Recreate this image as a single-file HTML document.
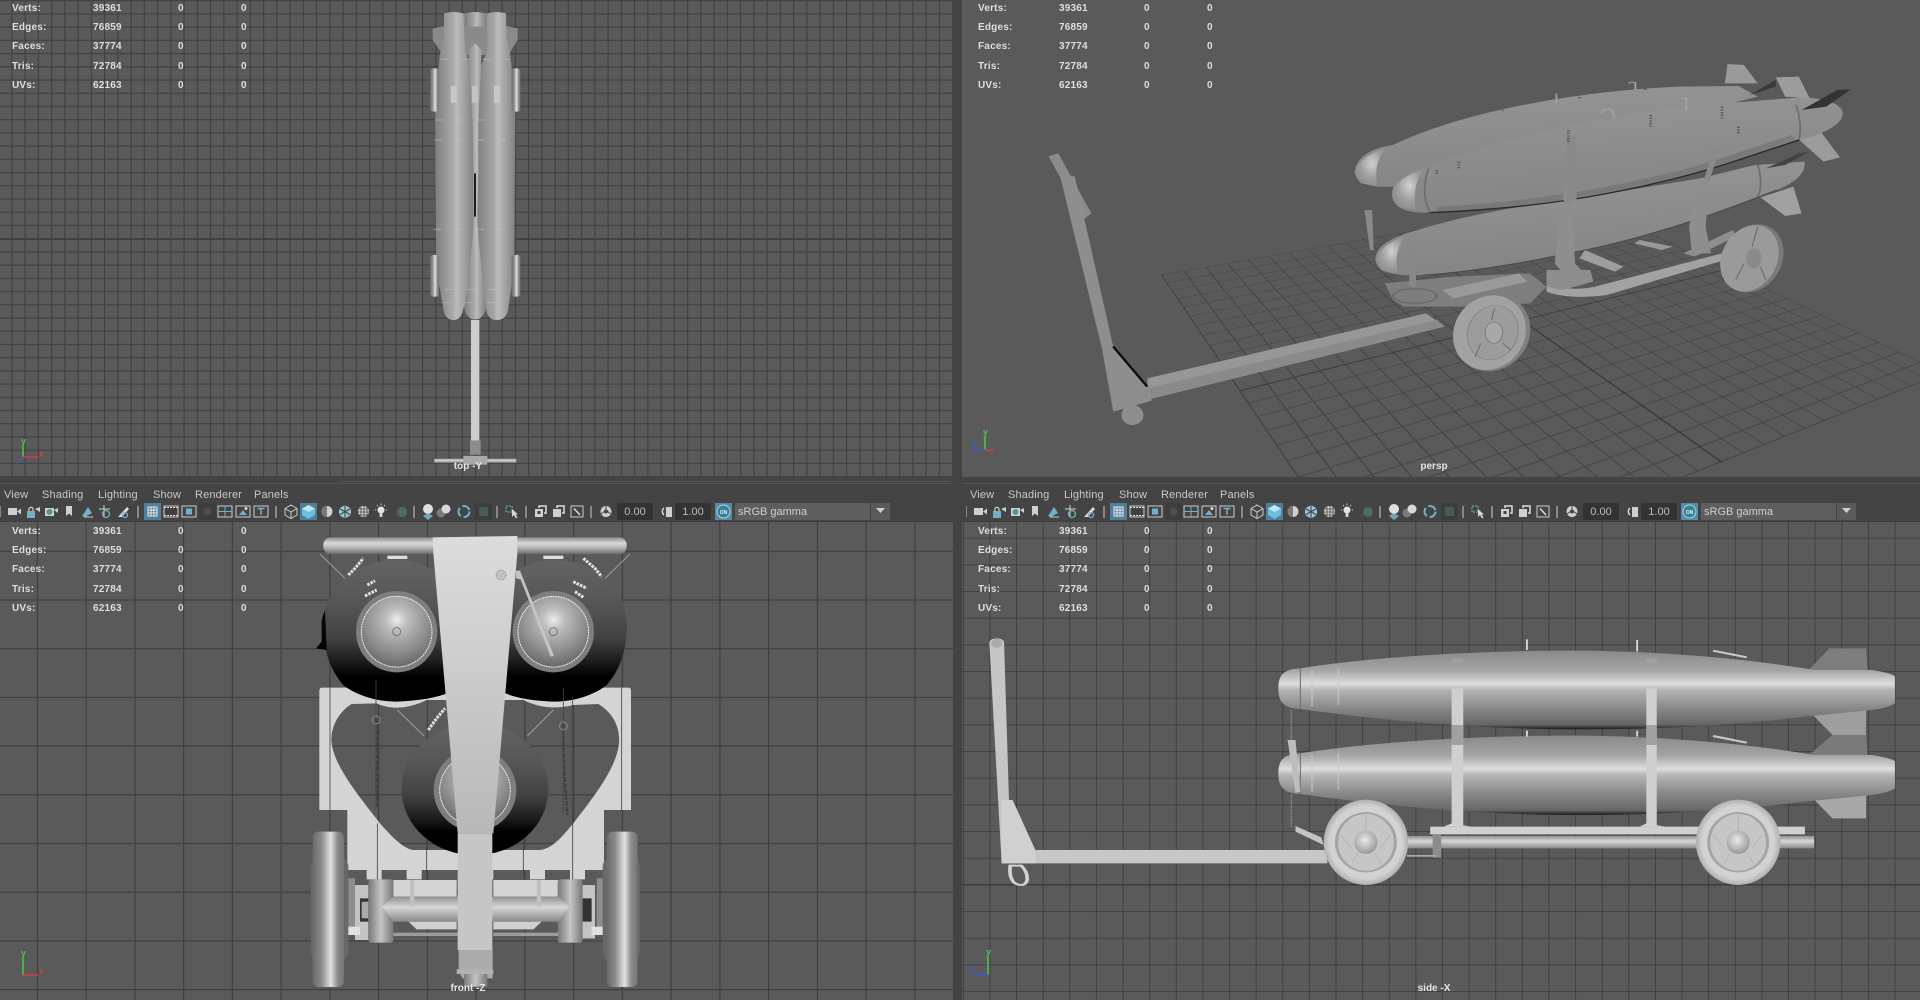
<!DOCTYPE html>
<html lang="en">
<head>
<meta charset="utf-8">
<title>Maya Viewports</title>
<style>
html,body{margin:0;padding:0;width:1920px;height:1000px;overflow:hidden;background:#444;font-family:"Liberation Sans",sans-serif}
svg{position:absolute;left:0;top:0;display:block}
.hud{position:absolute;width:260px;color:#dedede;font:bold 10px/19.2px "Liberation Sans",sans-serif;letter-spacing:.2px}
.hud div{position:relative;height:19.2px}
.hud span{position:absolute;top:0}
.hud span:nth-child(2){left:81px}
.hud span:nth-child(3){left:166px}
.hud span:nth-child(4){left:229px}
.lab{position:absolute;color:#e4e4e4;font:bold 10px/12px "Liberation Sans",sans-serif;white-space:nowrap;transform:translateX(-50%)}
.m{position:absolute;top:489px;color:#c9c9c9;font:11px/13px "Liberation Sans",sans-serif;letter-spacing:.15px;white-space:nowrap}
.fld{position:absolute;top:503px;height:17px;background:#333;color:#bcbcbc;font:11px/18px "Liberation Sans",sans-serif;text-align:center;border-radius:2px}
.cmb{position:absolute;top:503px;height:17px;background:#5e5e5e;color:#cfcfcf;font:11px/19px "Liberation Sans",sans-serif;padding-left:3px;box-sizing:border-box;white-space:nowrap}
</style>
</head>
<body>
<svg width="1920" height="1000" viewBox="0 0 1920 1000">
<defs>
<pattern id="gTL" patternUnits="userSpaceOnUse" x="11.25" y=".1" width="13.25" height="13.22"><rect width="13.25" height="13.22" fill="#5a5a5a"/><rect width="1.2" height="13.22" fill="#424242"/><rect width="13.25" height="1.2" fill="#424242"/></pattern>
<pattern id="gBL" patternUnits="userSpaceOnUse" x="36.8" y="15" width="48.75" height="48.7"><rect width="48.75" height="48.7" fill="#5a5a5a"/><rect width="1.2" height="48.7" fill="#3f3f3f"/><rect width="48.75" height="1.2" fill="#3f3f3f"/></pattern>
<pattern id="gBR" patternUnits="userSpaceOnUse" x="4.5" y="4.3" width="26.62" height="26.67"><rect width="26.62" height="26.67" fill="#5a5a5a"/><rect width="1" height="26.67" fill="#414141"/><rect width="26.62" height="1" fill="#414141"/></pattern>
</defs>
<rect x="0" y="0" width="953" height="477" fill="url(#gTL)"/>
<rect x="0" y="238.5" width="953" height="1.4" fill="#3e3e3e"/>
<rect x="962" y="0" width="958" height="477" fill="#5a5a5a"/>
<rect x="0" y="522" width="953" height="478" fill="url(#gBL)"/>
<rect x="962" y="522" width="958" height="478" fill="url(#gBR)"/>
<rect x="962" y="884" width="958" height="1.3" fill="#3c3c3c"/>
</svg>

<div style="position:absolute;left:962px;top:0;width:958px;height:477px;overflow:hidden">
<div style="position:absolute;left:-962px;top:0;width:1002px;height:1002px;transform-origin:0 0;transform:matrix3d(.89304,-.01403,0,.00029838,-.39292,.05807,0,-.00044302,0,0,1,0,1161,275,0,1);background-image:linear-gradient(90deg,transparent 500px,#3a3a3a 500px,#3a3a3a 503px,transparent 503px),linear-gradient(transparent 500px,#3a3a3a 500px,#3a3a3a 503px,transparent 503px),linear-gradient(#434343 2px,transparent 2px),linear-gradient(90deg,#434343 2px,transparent 2px);background-size:1002px 1002px,1002px 1002px,41.667px 41.667px,41.667px 41.667px"></div>
</div>

<svg width="1920" height="1000" viewBox="0 0 1920 1000">
<defs>
<linearGradient id="bombTop" x1="0" y1="0" x2="0" y2="1"><stop offset="0" stop-color="#646464"/><stop offset=".3" stop-color="#565656"/><stop offset=".55" stop-color="#424242"/><stop offset=".72" stop-color="#1c1c1c"/><stop offset=".82" stop-color="#000"/><stop offset="1" stop-color="#000"/></linearGradient>
<radialGradient id="dome" cx=".5" cy=".33" r=".72"><stop offset="0" stop-color="#ececec"/><stop offset=".22" stop-color="#bcbcbc"/><stop offset=".7" stop-color="#858585"/><stop offset="1" stop-color="#606060"/></radialGradient>
<linearGradient id="bar" x1="0" y1="0" x2="0" y2="1"><stop offset="0" stop-color="#8a8a8a"/><stop offset=".35" stop-color="#d8d8d8"/><stop offset=".55" stop-color="#c0c0c0"/><stop offset="1" stop-color="#6d6d6d"/></linearGradient>
<linearGradient id="pan" x1="0" y1="0" x2="0" y2="1"><stop offset="0" stop-color="#dcdcdc"/><stop offset="1" stop-color="#b8b8b8"/></linearGradient>
<linearGradient id="wheelH" x1="0" y1="0" x2="1" y2="0"><stop offset="0" stop-color="#6a6a6a"/><stop offset=".28" stop-color="#8c8c8c"/><stop offset=".58" stop-color="#e2e2e2"/><stop offset=".8" stop-color="#8a8a8a"/><stop offset="1" stop-color="#747474"/></linearGradient>
<linearGradient id="cyl" x1="0" y1="0" x2="1" y2="0"><stop offset="0" stop-color="#787878"/><stop offset=".5" stop-color="#c4c4c4"/><stop offset="1" stop-color="#787878"/></linearGradient>
<linearGradient id="tube" x1="0" y1="0" x2="0" y2="1"><stop offset="0" stop-color="#909090"/><stop offset=".42" stop-color="#d6d6d6"/><stop offset="1" stop-color="#8a8a8a"/></linearGradient>
<linearGradient id="sideBomb" x1="0" y1="0" x2="0" y2="1"><stop offset="0" stop-color="#8a8a8a"/><stop offset=".25" stop-color="#a4a4a4"/><stop offset=".42" stop-color="#dedede"/><stop offset=".5" stop-color="#b4b4b4"/><stop offset=".72" stop-color="#8a8a8a"/><stop offset=".94" stop-color="#666"/><stop offset="1" stop-color="#1a1a1a"/></linearGradient>
<linearGradient id="perspB" x1="0" y1="0" x2=".25" y2="1"><stop offset="0" stop-color="#969696"/><stop offset="1" stop-color="#858585"/></linearGradient>
<linearGradient id="topT" x1="0" y1="0" x2="1" y2="0"><stop offset="0" stop-color="#7e7e7e"/><stop offset=".45" stop-color="#a8a8a8"/><stop offset=".55" stop-color="#bcbcbc"/><stop offset="1" stop-color="#808080"/></linearGradient>
<radialGradient id="wheelS" cx=".5" cy=".5" r=".5"><stop offset="0" stop-color="#d4d4d4"/><stop offset=".85" stop-color="#d2d2d2"/><stop offset="1" stop-color="#b0b0b0"/></radialGradient>
<radialGradient id="hub" cx=".45" cy=".4" r=".6"><stop offset="0" stop-color="#e8e8e8"/><stop offset="1" stop-color="#999"/></radialGradient>
<radialGradient id="nose" cx=".55" cy=".4" r=".6"><stop offset="0" stop-color="#d0d0d0"/><stop offset=".6" stop-color="#a0a0a0"/><stop offset="1" stop-color="#8e8e8e"/></radialGradient>
</defs>

<!-- TOP VIEW -->
<g transform="translate(400 0) scale(.33333)">
<path d="M98 85 L135 78 L135 40 L318 40 L318 78 L353 85 L353 120 L325 165 L130 165 L98 120Z" fill="#8a8a8a"/>
<path d="M132 40 Q160 32 190 40 L195 150 L222 230 L222 880 L190 925 Q185 960 160 960 Q135 960 130 925 L108 800 L105 300 L120 160 L132 120Z" fill="url(#topT)"/>
<path d="M262 40 Q290 32 318 40 L320 120 L330 160 L346 300 L343 800 L325 925 Q320 960 290 960 Q262 960 258 925 L230 880 L230 230 L262 150Z" fill="url(#topT)"/>
<path d="M195 40 Q225 32 255 40 L258 80 L195 80Z" fill="url(#topT)"/>
<path d="M205 150 L225 130 L245 150 L235 370 L235 520 L232 660 L235 710 L250 860 L258 925 Q250 958 225 958 Q200 958 193 925 L205 840 L218 710 L220 660 L220 520 L218 370Z" fill="url(#topT)"/>
<rect x="90" y="205" width="27" height="130" rx="8" fill="url(#wheelH)"/><rect x="335" y="205" width="26" height="130" rx="8" fill="url(#wheelH)"/>
<rect x="90" y="765" width="27" height="125" rx="8" fill="url(#wheelH)"/><rect x="335" y="765" width="26" height="125" rx="8" fill="url(#wheelH)"/>
<rect x="222" y="520" width="6" height="130" fill="#1e1e1e"/>
<rect x="213" y="960" width="25" height="362" fill="#cecece"/>
<rect x="210" y="1322" width="32" height="42" fill="#8c8c8c"/>
<rect x="103" y="1376" width="246" height="13" rx="3" fill="url(#bar)"/>
<rect x="190" y="1368" width="72" height="26" fill="#a8a8a8"/>
<rect x="152" y="258" width="18" height="50" fill="#c8c8c8"/><rect x="216" y="258" width="18" height="50" fill="#c4c4c4"/><rect x="282" y="258" width="18" height="50" fill="#c8c8c8"/>
<path d="M120 178H330M105 360H345M102 420H345M100 688H350M135 868H315M132 908H320" stroke="#c0c0c0" stroke-width="3" stroke-dasharray="24 40" fill="none" opacity=".6"/>
</g>

<!-- PERSPECTIVE -->
<g transform="translate(1020 50) scale(.54847 .33333)">
<path d="M1285 100L1290 42L1320 45L1345 100Z" fill="#9a9a9a"/>
<path d="M1378 82L1420 80L1440 145L1395 140Z" fill="#9c9c9c"/>
<path d="M1420 268L1460 245L1495 322L1465 335Z" fill="#9c9c9c"/>
<path d="M1350 442L1410 410L1425 490L1395 498Z" fill="#a0a0a0"/>
<path d="M665 700L790 680L930 670L960 710L930 760L800 770L700 770L680 750Z" fill="#7e7e7e"/>
<path d="M770 720L910 670L925 695L790 745Z" fill="#9a9a9a"/>
<path d="M1030 600L1100 650L1085 665L1020 625Z" fill="#9e9e9e"/>
<path d="M1130 570L1190 590L1170 600L1120 580Z" fill="#9a9a9a"/>
<path d="M960 700Q1010 730 1060 705L1280 610L1285 630L1070 735Q1000 750 960 725Z" fill="#a2a2a2"/>
<path d="M1210 610L1300 540L1305 560L1230 620Z" fill="#8e8e8e"/>
<path d="M960 660L1040 660L1045 695L990 720L960 710Z" fill="#8e8e8e"/>
<path d="M648 625C650 585 680 565 705 550C800 500 900 470 1000 450L1240 385L1340 345L1430 335C1435 370 1410 400 1380 420L1300 470C1200 530 1100 580 1000 610C900 645 800 670 735 675C680 680 648 665 648 625Z" fill="url(#perspB)"/>
<path d="M735 675C800 670 900 645 1000 610C1100 580 1200 530 1300 470L1380 420" fill="none" stroke="#4a4a4a" stroke-width="3"/>
<path d="M610 370C612 320 640 295 680 285C800 190 1000 125 1200 110L1310 108L1345 140L1200 200L800 350L680 410Q620 415 610 370Z" fill="url(#perspB)"/>
<path d="M678 430C680 385 710 365 745 350C900 250 1150 170 1300 158L1400 145C1460 135 1500 160 1500 190C1500 230 1450 260 1420 270L1300 335C1200 390 1080 430 1000 450C900 475 800 485 745 488C700 490 678 470 678 430Z" fill="url(#perspB)"/>
<path d="M760 478C820 475 905 462 1000 438C1080 418 1200 378 1295 325L1410 262" fill="none" stroke="#6e6e6e" stroke-width="16" opacity=".55"/>
<path d="M745 488C800 485 900 475 1000 450C1080 430 1200 390 1300 335L1420 270" fill="none" stroke="#2a2a2a" stroke-width="4"/>
<path d="M690 470C660 420 700 375 735 358C722 390 716 430 722 480Z" fill="url(#nose)"/>
<path d="M622 400C592 350 636 310 666 295C650 330 646 370 652 410Z" fill="url(#nose)"/>
<path d="M660 662C632 615 670 580 700 560C688 600 682 630 690 672Z" fill="url(#nose)"/>
<path d="M745 355C735 400 735 450 748 488M1415 165C1422 200 1425 240 1420 270M1345 345C1352 380 1352 420 1345 440" fill="none" stroke="#6c6c6c" stroke-width="3"/>
<path d="M1330 135L1378 90L1378 110L1340 130Z" fill="#3a3a3a"/>
<path d="M1425 180L1490 120L1515 118L1470 170Z" fill="#333"/>
<path d="M1360 355L1420 310L1440 305L1395 345Z" fill="#444"/>
<path d="M995 260L1012 260L1015 450L1002 465L990 450Z" fill="#8a8a8a"/>
<path d="M985 470L1005 465L1012 640L1040 690L1000 690L975 640Z" fill="#8e8e8e"/>
<path d="M1265 290L1278 290L1258 385L1245 400Z" fill="#8a8a8a"/>
<path d="M1235 400L1258 385L1250 530L1260 610L1225 610L1220 530Z" fill="#8e8e8e"/>
<path d="M628 480L642 480L645 600L638 600Z" fill="#888"/>
<rect x="710" y="590" width="12" height="120" fill="#888"/>
<ellipse cx="720" cy="738" rx="40" ry="22" fill="none" stroke="#6a6a6a" stroke-width="4"/>
<path d="M232 985L740 790L775 830L235 1048Z" fill="#979797"/><path d="M232 1015L760 810L775 830L235 1048Z" fill="#8a8a8a"/>
<path d="M52 318L70 310L130 490L115 510Z" fill="#8c8c8c"/>
<path d="M72 370L100 380L170 890L235 1010L240 1052L170 1085L150 900Z" fill="#8e8e8e"/>
<path d="M170 890L232 1010" stroke="#0c0c0c" stroke-width="5"/>
<ellipse cx="205" cy="1095" rx="20" ry="30" fill="#8e8e8e"/>
<ellipse cx="1335" cy="625" rx="56" ry="103" fill="#7a7a7a" transform="rotate(8 1335 625)"/>
<ellipse cx="1330" cy="625" rx="52" ry="100" fill="#9a9a9a" transform="rotate(8 1330 625)"/>
<ellipse cx="1338" cy="625" rx="14" ry="30" fill="#8a8a8a"/>
<path d="M1335 590L1345 530M1320 640L1305 690M1350 650L1360 690" stroke="#6a6a6a" stroke-width="2"/>
<ellipse cx="860" cy="848" rx="70" ry="116" fill="#808080" transform="rotate(5 860 848)"/>
<ellipse cx="856" cy="848" rx="66" ry="112" fill="#a2a2a2" transform="rotate(5 856 848)"/>
<ellipse cx="862" cy="848" rx="46" ry="82" fill="#9c9c9c" stroke="#858585" stroke-width="2" transform="rotate(5 862 848)"/>
<ellipse cx="864" cy="848" rx="16" ry="32" fill="#a8a8a8" stroke="#7b7b7b" stroke-width="2"/>
<path d="M860 810L865 775M840 880L830 920M880 880L895 900" stroke="#6a6a6a" stroke-width="2"/>
<path d="M1060 190Q1062 175 1078 178L1085 205M1205 145L1215 145L1215 180M978 130V160M1110 100Q1112 95 1122 98V120" stroke="#a6a6a6" stroke-width="3" fill="none"/>
<path d="M760 360v15M800 335v20M1000 240v40M1150 195v35M1280 170v35M1310 230v20M880 165v18M1020 125v20M1140 100v20M700 245v20M660 265v20" stroke="#5a5a5a" stroke-width="5" stroke-dasharray="4 4" fill="none"/>
</g>

<!-- FRONT -->
<g transform="translate(280 510) scale(.33333)">
<path fill-rule="evenodd" fill="#d4d4d4" d="M118 542Q118 533 127 533H1045Q1053 533 1053 542V900H972V1080H915V1108H870V1080H795V1108H750V1080H640V1108H535V1080H425V1108H380V1080H305V1108H260V1080H202V900H118ZM215 582C170 610 150 660 155 700C165 770 230 850 300 940C340 985 370 1015 400 1020H780C820 1015 850 975 880 940C950 850 1010 770 1017 700C1020 650 1000 610 955 582L880 585C820 600 770 590 730 570L440 570C400 590 340 605 290 580Z"/>
<path d="M340 1110H530V1160H340ZM640 1110H835V1160H640Z" fill="#d4d4d4"/>
<path d="M385 1235H530V1258H410ZM640 1235H785L760 1258H640Z" fill="#d0d0d0"/>
<ellipse cx="585" cy="838" rx="220" ry="198" fill="url(#bombTop)"/>
<path d="M130 350C130 230 230 150 350 150C450 150 530 220 560 300L560 520C500 560 440 570 350 575C280 575 220 550 190 525C150 480 130 420 130 350Z" fill="url(#bombTop)"/>
<path d="M1040 350C1040 230 940 150 820 150C720 150 650 220 620 300L620 520C680 560 730 570 820 575C890 575 950 550 980 525C1020 480 1040 420 1040 350Z" fill="url(#bombTop)"/>
<path d="M108 415L125 395L125 330L135 300L140 420Z" fill="#050505"/>
<path d="M120 132L195 205M1050 132L975 205M352 600L432 678M820 600L742 678" stroke="#9c9c9c" stroke-width="3" fill="none"/>
<rect x="322" y="137" width="60" height="10" fill="#dcdcdc"/><rect x="790" y="137" width="60" height="10" fill="#dcdcdc"/>
<g fill="none" stroke="#e2e2e2" stroke-width="9" stroke-dasharray="8 3">
<path d="M205 195L225 175L250 145"/><path d="M262 225L285 212M255 258L290 240"/><path d="M910 145L945 175L965 200"/><path d="M880 215L920 235M885 245L910 262"/><path d="M445 660L470 625L495 595"/>
</g>
<circle cx="350" cy="365" r="122" fill="#7e7e7e"/><circle cx="350" cy="365" r="106" fill="url(#dome)" stroke="#ededed" stroke-width="3" stroke-dasharray="6 2"/><circle cx="350" cy="365" r="12" fill="none" stroke="#777" stroke-width="3"/>
<circle cx="820" cy="365" r="122" fill="#7e7e7e"/><circle cx="820" cy="365" r="106" fill="url(#dome)" stroke="#ededed" stroke-width="3" stroke-dasharray="6 2"/><circle cx="820" cy="365" r="12" fill="none" stroke="#777" stroke-width="3"/>
<circle cx="585" cy="840" r="124" fill="#7e7e7e"/><circle cx="585" cy="840" r="106" fill="url(#dome)" stroke="#ededed" stroke-width="3" stroke-dasharray="6 2"/>
<path d="M708 182L720 182L822 438L812 440L722 208L708 205Z" fill="#c4c4c4"/>
<path d="M288 510V900M850 533V910M292 940V1108M878 560V1108M440 985V1100M730 985V1100M150 533V900M1025 533V900" stroke="#444" stroke-width="2.500" fill="none"/>
<path d="M288 625C300 680 285 760 292 890M850 640C848 720 855 820 862 915" stroke="#424242" stroke-width="7" stroke-dasharray="14 4" fill="none"/>
<circle cx="288" cy="630" r="12" fill="none" stroke="#888" stroke-width="3"/><circle cx="850" cy="648" r="12" fill="none" stroke="#888" stroke-width="3"/>
<rect x="130" y="82" width="910" height="50" rx="22" fill="url(#bar)"/>
<rect x="92" y="1040" width="113" height="315" rx="30" fill="#686868"/><rect x="968" y="1040" width="112" height="315" rx="30" fill="#686868"/>
<rect x="98" y="965" width="94" height="466" rx="18" fill="url(#wheelH)"/><rect x="980" y="965" width="93" height="466" rx="18" fill="url(#wheelH)"/>
<path d="M205 1105H225V1270H205ZM950 1105H968V1270H950Z" fill="#8e8e8e"/>
<path d="M225 1125H265V1290H225ZM905 1125H945V1285H905Z" fill="#c4c4c4"/>
<path d="M240 1165H265V1235H240ZM905 1165H935V1235H905Z" fill="#333"/>
<path d="M245 1175H265V1225H245Z" fill="#aaa"/>
<rect x="265" y="1108" width="75" height="190" rx="8" fill="url(#cyl)"/><rect x="833" y="1108" width="75" height="190" rx="8" fill="url(#cyl)"/>
<path d="M305 1190L340 1160H835L868 1190L835 1235H340Z" fill="url(#tube)"/>
<rect x="340" y="1268" width="195" height="10" fill="#9c9c9c"/><rect x="640" y="1268" width="195" height="10" fill="#9c9c9c"/>
<path d="M205 1250H240V1275H205ZM935 1250H968V1275H935Z" fill="#e0e0e0"/>
<rect x="390" y="1110" width="13" height="80" fill="#c0c0c0"/><rect x="770" y="1110" width="13" height="80" fill="#c0c0c0"/>
<path d="M458 82L712 78L712 130L640 970H533L460 130Z" fill="url(#pan)"/>
<rect x="533" y="970" width="104" height="350" fill="#c6c6c6"/>
<path d="M536 1320H638V1405H548L536 1385Z" fill="#ababab"/>
<rect x="552" y="1378" width="70" height="52" fill="url(#cyl)"/>
<rect x="530" y="1378" width="110" height="14" fill="#b2b2b2"/>
<circle cx="663" cy="195" r="15" fill="#c2c2c2" stroke="#7b7b7b" stroke-width="2" stroke-dasharray="4 3"/>
</g>

<!-- SIDE -->
<g transform="translate(960 600) scale(.61224 .33333)">
<path d="M1385 212L1420 145L1480 145L1483 222Z" fill="#7e7e7e"/>
<path d="M1385 330L1480 320L1480 405L1425 405Z" fill="#9e9e9e"/>
<path d="M1385 468L1425 405L1480 405L1483 478Z" fill="#7a7a7a"/>
<path d="M1385 580L1480 575L1480 655L1425 655Z" fill="#a8a8a8"/>
<path d="M520 265C520 225 528 207 556 205C640 180 800 152 1000 152C1150 152 1300 180 1395 210L1490 210Q1527 222 1527 230V310Q1515 325 1480 332L1380 350C1250 380 1130 388 1000 388C850 388 680 360 556 327C528 325 520 305 520 265Z" fill="url(#sideBomb)"/>
<path d="M520 520C520 480 528 462 556 460C640 435 800 407 1000 407C1150 407 1300 435 1395 465L1490 465Q1527 477 1527 485V565Q1515 580 1480 587L1380 605C1250 635 1130 645 1000 645C850 645 680 615 556 582C528 580 520 560 520 520Z" fill="url(#sideBomb)"/>
<path d="M556 205V327M556 460V582" stroke="#777" stroke-width="2"/>
<path d="M575 210V320M618 205V315M575 465V575M618 460V570" stroke="#c8c8c8" stroke-width="4" opacity=".5"/>
<path d="M803 265H822V680H803ZM1121 265H1138V680H1121Z" fill="#cfcfcf"/>
<path d="M803 175H822V190H803ZM1121 175H1138V190H1121ZM803 375H822V435H803ZM1121 375H1138V435H1121Z" fill="#a0a0a0"/>
<path d="M803 670L835 680H790ZM1121 670L1152 680H1110Z" fill="#d4d4d4"/>
<path d="M926 118V150M1106 120V155M926 392V410M1106 392V410" stroke="#d8d8d8" stroke-width="3"/>
<path d="M1230 152L1285 172M1230 408L1285 428" stroke="#c8c8c8" stroke-width="6"/>
<path d="M535 420H548L556 575L548 578Z" fill="#bdbdbd"/>
<path d="M541 330V420M541 585V680" stroke="#9a9a9a" stroke-width="2" stroke-dasharray="4 3"/>
<path d="M548 678L590 712L594 735L548 695Z" fill="#c4c4c4"/>
<rect x="768" y="680" width="612" height="23" fill="#d0d0d0"/>
<rect x="730" y="708" width="665" height="37" fill="url(#tube)"/>
<rect x="772" y="703" width="14" height="70" fill="#8c8c8c"/>
<rect x="730" y="765" width="48" height="5" fill="#a8a8a8"/>
<path d="M48 130Q48 115 60 115Q72 115 72 130L80 600L85 610L123 750H600V790H68Z" fill="#c6c6c6"/>
<path d="M68 600H86L123 750V790H68Z" fill="#d0d0d0"/>
<path d="M82 797C80 830 85 855 100 855C113 855 113 820 100 797Z" fill="#5a5a5a" stroke="#d2d2d2" stroke-width="6"/>
<ellipse cx="60" cy="130" rx="9" ry="14" fill="#aaa"/>
<g>
<ellipse cx="663" cy="727" rx="69" ry="128" fill="url(#wheelS)"/>
<ellipse cx="663" cy="727" rx="48" ry="88" fill="#c6c6c6" stroke="#a4a4a4" stroke-width="5"/>
<ellipse cx="663" cy="727" rx="19" ry="35" fill="url(#hub)"/>
<path d="M663 692V645M640 745L622 705M686 745L702 705M650 760L640 790M678 760L688 790" stroke="#a8a8a8" stroke-width="1"/>
</g>
<g>
<ellipse cx="1271" cy="727" rx="69" ry="128" fill="url(#wheelS)"/>
<ellipse cx="1271" cy="727" rx="48" ry="88" fill="#c6c6c6" stroke="#a4a4a4" stroke-width="5"/>
<ellipse cx="1271" cy="727" rx="19" ry="35" fill="url(#hub)"/>
<path d="M1271 692V645M1248 745L1230 705M1294 745L1310 705M1258 760L1248 790M1286 760L1296 790" stroke="#a8a8a8" stroke-width="1"/>
</g>
</g>

<!-- axis gizmos -->
<g fill="none" stroke-width="1.6">
<path d="M23 457V445" stroke="#4fc04f"/><path d="M23 457H38" stroke="#d04040"/><path d="M23 457L19 462" stroke="#3a5ad0"/>
<path d="M985 450V436" stroke="#4fc04f"/><path d="M985 450H994" stroke="#d04040"/><path d="M985 450H973" stroke="#3a5ad0"/>
<path d="M23 975V957" stroke="#4fc04f"/><path d="M23 975H38" stroke="#d04040"/>
<path d="M988 975V957" stroke="#4fc04f"/><path d="M988 975H974" stroke="#3a5ad0"/>
</g>
<g font-family="Liberation Sans, sans-serif" font-size="9" font-weight="bold">
<text x="21" y="444" fill="#4fc04f">y</text><text x="39" y="457" fill="#d04040">x</text>
<text x="983" y="435" fill="#4fc04f">y</text><text x="972" y="447" fill="#3a5ad0">z</text>
<text x="21" y="956" fill="#4fc04f">y</text><text x="39" y="974" fill="#d04040">x</text>
<text x="986" y="955" fill="#4fc04f">y</text><text x="969" y="972" fill="#3a5ad0">z</text>
</g>

<!-- panel bars -->
<rect x="0" y="477" width="1920" height="45" fill="#444"/>
<rect x="953" y="0" width="9" height="477" fill="#444"/>
<rect x="953" y="522" width="9" height="478" fill="#444"/>
<rect x="0" y="483" width="953" height="1" fill="#565656"/>
<rect x="962" y="483" width="958" height="1" fill="#565656"/>
<rect x="340" y="481" width="610" height="1" fill="#6a6a6a" opacity=".5"/>
<rect x="0" y="521" width="953" height="1" fill="#3c3c3c"/>
<rect x="962" y="521" width="958" height="1" fill="#3c3c3c"/>

<defs>
<g id="tb" fill="#d0d0d0">
<rect x="0" y="6" width="1" height="11" fill="#888"/>
<rect x="8" y="8" width="9" height="7"/><path d="M17 11.5L21 8.5V14.500Z"/>
<rect x="27" y="11" width="8" height="7" fill="#6fb2c8"/><path d="M29 11V8.500Q31 6 33 8.500V11" fill="none" stroke="#ccc" stroke-width="1.2"/><path d="M35 9L40 7V12Z"/>
<rect x="45" y="8" width="9" height="8"/><circle cx="49.500" cy="12" r="3" fill="#5e8c9c"/><path d="M54 10L58 8V13Z"/>
<path d="M66 6H72V16L69 13.500L66 16Z"/>
<path d="M88 7L92 13L85 17L82 16Z" fill="#6fb2c8"/><path d="M84 17H93" stroke="#ccc"/>
<path d="M104 5V17M99 9H110" stroke="#d0d0d0" fill="none"/><circle cx="106" cy="14" r="3.500" fill="none" stroke="#6fb2c8" stroke-width="1.3"/>
<path d="M118 17L127 7L129 9L122 17Z" fill="#ddd"/><circle cx="125" cy="15" r="2.500" fill="none" stroke="#6fb2c8" stroke-width="1.3"/>
<rect x="137" y="6" width="2" height="12" fill="#8a8a8a"/>
<rect x="144" y="3" width="17" height="17" fill="#4f7f9a"/><path d="M148 7H157V16H148ZM151 7V16M154 7V16M148 10H157M148 13H157" fill="none" stroke="#e8e8e8"/>
<rect x="164" y="6" width="14" height="11" fill="none" stroke="#ccc"/><rect x="166" y="9" width="10" height="5" fill="#3f3f3f"/><path d="M164 7.500H178M164 15.500H178" stroke="#ddd" stroke-dasharray="2 1"/>
<rect x="182" y="6" width="14" height="11" fill="none" stroke="#ccc"/><rect x="186" y="8.500" width="6" height="6" fill="#6fb2c8"/>
<rect x="199" y="3" width="17" height="17" fill="#3d3d3d"/><circle cx="207.500" cy="11.500" r="4" fill="#4e4e4e"/>
<rect x="218" y="6" width="14" height="11" fill="none" stroke="#ccc"/><path d="M225 6V17M218 11.500H232" stroke="#6fb2c8"/>
<rect x="236" y="6" width="14" height="11" fill="none" stroke="#ccc"/><path d="M239 15L243 10L247 15Z" fill="#6fb2c8"/><circle cx="246" cy="8.500" r="1.500" fill="#ddd"/>
<rect x="254" y="6" width="14" height="11" fill="none" stroke="#ccc"/><path d="M257.500 8.500H264.500M261 8.500V15" stroke="#6fb2c8" stroke-width="1.500"/>
<rect x="275" y="6" width="2" height="12" fill="#8a8a8a"/>
<path d="M291 5L297 8.500V15L291 18.500L285 15V8.500ZM285 8.500L291 12L297 8.500M291 12V18.500" fill="none" stroke="#ccc"/>
<rect x="300" y="3" width="17" height="17" fill="#4f7f9a"/><path d="M308.500 5L315 8.500V15L308.500 19L302 15V8.500Z" fill="#69c0dc"/><path d="M302 8.500L308.500 12L315 8.500L308.500 5Z" fill="#bfe6f2"/>
<circle cx="327" cy="11.500" r="5.500"/><path d="M327 6A5.500 5.500 0 0 0 327 17Z" fill="#7a7a7a"/>
<path d="M345 5L351 8.500V15L345 18.500L339 15V8.500Z" fill="#9cc4d2"/><path d="M345 5V18.500M339 8.500L351 15M351 8.500L339 15" stroke="#444"/>
<circle cx="363.500" cy="11.500" r="5.500" fill="#d4d4d4"/><path d="M359 9H368M358 12H369M359 15H368M361 7V16M364 6V17M367 7V16" stroke="#444" stroke-width=".8"/>
<circle cx="381" cy="10" r="3.500" fill="#e2e2e2"/><rect x="379.500" y="13" width="3" height="4"/><path d="M375 10H376M386 10H387M377 5L378 6M385 5L384 6M381 3.500V5" stroke="#d0d0d0"/>
<circle cx="402" cy="12" r="5" fill="#4d6a6a"/><circle cx="396" cy="15" r="2" fill="#4a4a4a"/>
<rect x="413" y="6" width="2" height="12" fill="#8a8a8a"/>
<circle cx="428" cy="9" r="5" fill="#e0e0e0"/><path d="M423 16Q428 12 433 16L428 20Z" fill="#6fa7b8"/>
<circle cx="441" cy="13" r="4.500" fill="#7a7a7a"/><circle cx="446" cy="9" r="4.500" fill="#d8d8d8"/>
<circle cx="464" cy="11.500" r="5.500" fill="none" stroke="#6fb2c8" stroke-width="2" stroke-dasharray="9 3"/>
<rect x="475" y="3" width="17" height="17" fill="#3d3d3d"/><rect x="479" y="7" width="9" height="9" fill="#4a5a5a"/>
<rect x="496" y="6" width="2" height="12" fill="#8a8a8a"/>
<path d="M506 6h6v6h-6z" fill="none" stroke="#6fb2c8" stroke-dasharray="2 1"/><path d="M512 9V17L514 15L516 18.500L517.500 17.500L515.500 14.500H518Z" fill="#d8d8d8"/>
<rect x="525" y="6" width="2" height="12" fill="#8a8a8a"/>
<rect x="535" y="9" width="8" height="8"/><path d="M539 8V6H546V13H544" fill="none" stroke="#ddd" stroke-width="1.500"/><rect x="537.500" y="11" width="3" height="3" fill="#444"/>
<rect x="553" y="9" width="8" height="8"/><path d="M557 8V6H564V13H562" fill="none" stroke="#ddd" stroke-width="1.500"/>
<rect x="571" y="6" width="12" height="11" fill="none" stroke="#ccc"/><path d="M574 8.500L580 15" stroke="#ddd" stroke-width="1.500"/>
<rect x="590" y="6" width="2" height="12" fill="#8a8a8a"/>
<circle cx="606" cy="11.500" r="5.500"/><circle cx="606" cy="11.500" r="2" fill="#444"/><path d="M606 6V11M601 14L605 11M611 14L607 11" stroke="#444"/>
<rect x="666" y="7" width="6" height="10"/><path d="M664 8A4.500 4.500 0 0 0 664 15" fill="none" stroke="#ddd" stroke-width="1.400"/>
<rect x="715" y="3" width="17" height="17" fill="#5a8aa2"/><circle cx="723.500" cy="11.500" r="6.500" fill="#3f7f96" stroke="#9fd6e6"/>
<rect x="871" y="3" width="19" height="17" fill="#5a5a5a"/><path d="M876 8H885L880.500 13Z" fill="#cfcfcf"/>
</g>
</defs>
<use href="#tb" x="0" y="500"/>
<use href="#tb" x="966" y="500"/>
<text x="723.500" y="514" font-family="Liberation Sans, sans-serif" font-size="5" font-weight="bold" fill="#d8f0f8" text-anchor="middle">ON</text>
<text x="1689.500" y="514" font-family="Liberation Sans, sans-serif" font-size="5" font-weight="bold" fill="#d8f0f8" text-anchor="middle">ON</text>
</svg>

<div class="m" style="left:4px">View</div><div class="m" style="left:42px">Shading</div><div class="m" style="left:98px">Lighting</div><div class="m" style="left:153px">Show</div><div class="m" style="left:195px">Renderer</div><div class="m" style="left:254px">Panels</div>
<div class="m" style="left:970px">View</div><div class="m" style="left:1008px">Shading</div><div class="m" style="left:1064px">Lighting</div><div class="m" style="left:1119px">Show</div><div class="m" style="left:1161px">Renderer</div><div class="m" style="left:1220px">Panels</div>

<div class="fld" style="left:617px;width:36px">0.00</div><div class="fld" style="left:675px;width:36px">1.00</div><div class="cmb" style="left:735px;width:135px">sRGB gamma</div>
<div class="fld" style="left:1583px;width:36px">0.00</div><div class="fld" style="left:1641px;width:36px">1.00</div><div class="cmb" style="left:1701px;width:135px">sRGB gamma</div>

<div class="hud" style="left:12px;top:-1px"><div><span>Verts:</span><span>39361</span><span>0</span><span>0</span></div><div><span>Edges:</span><span>76859</span><span>0</span><span>0</span></div><div><span>Faces:</span><span>37774</span><span>0</span><span>0</span></div><div><span>Tris:</span><span>72784</span><span>0</span><span>0</span></div><div><span>UVs:</span><span>62163</span><span>0</span><span>0</span></div></div>
<div class="hud" style="left:978px;top:-1px"><div><span>Verts:</span><span>39361</span><span>0</span><span>0</span></div><div><span>Edges:</span><span>76859</span><span>0</span><span>0</span></div><div><span>Faces:</span><span>37774</span><span>0</span><span>0</span></div><div><span>Tris:</span><span>72784</span><span>0</span><span>0</span></div><div><span>UVs:</span><span>62163</span><span>0</span><span>0</span></div></div>
<div class="hud" style="left:12px;top:522px"><div><span>Verts:</span><span>39361</span><span>0</span><span>0</span></div><div><span>Edges:</span><span>76859</span><span>0</span><span>0</span></div><div><span>Faces:</span><span>37774</span><span>0</span><span>0</span></div><div><span>Tris:</span><span>72784</span><span>0</span><span>0</span></div><div><span>UVs:</span><span>62163</span><span>0</span><span>0</span></div></div>
<div class="hud" style="left:978px;top:522px"><div><span>Verts:</span><span>39361</span><span>0</span><span>0</span></div><div><span>Edges:</span><span>76859</span><span>0</span><span>0</span></div><div><span>Faces:</span><span>37774</span><span>0</span><span>0</span></div><div><span>Tris:</span><span>72784</span><span>0</span><span>0</span></div><div><span>UVs:</span><span>62163</span><span>0</span><span>0</span></div></div>

<div class="lab" style="left:468px;top:461px">top -Y</div>
<div class="lab" style="left:1434px;top:461px">persp</div>
<div class="lab" style="left:468px;top:983px">front -Z</div>
<div class="lab" style="left:1434px;top:983px">side -X</div>
</body>
</html>
